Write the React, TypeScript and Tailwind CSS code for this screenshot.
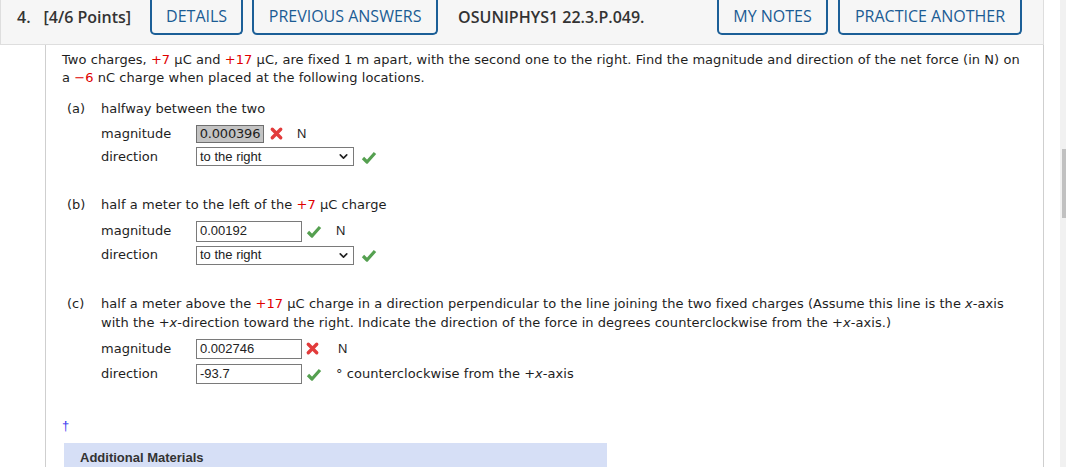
import { ChevronDown } from 'lucide-react';

const Red = ({ children }: { children: React.ReactNode }) => (
  <span className="text-[#e00000]">{children}</span>
);

const X = () => <i>x</i>;

const WrongMark = ({ className = '' }: { className?: string }) => (
  <svg viewBox="0 0 16 16" className={`w-[15px] h-[15px] ${className}`}>
    <path d="M3.5 3.5 L12.5 12.5 M12.5 3.5 L3.5 12.5" stroke="#e23b3b" strokeWidth="3.6" strokeLinecap="round" />
  </svg>
);

const RightMark = ({ className = '' }: { className?: string }) => (
  <svg viewBox="0 0 16 16" className={`w-[16px] h-[16px] ${className}`}>
    <path d="M2 9 L6 13 L14 4" fill="none" stroke="#55a050" strokeWidth="3.2" strokeLinejoin="round" />
  </svg>
);

const HeaderButton = ({ label, width }: { label: string; width: string }) => (
  <div
    className={`${width} h-[36px] -mt-[1px] flex items-center justify-center border-2 border-t-0 border-[#1c5f97] rounded-b-[5px] bg-[#f6f6f6] text-[#1b5c94] text-[16px] font-medium`}
  >
    {label}
  </div>
);

const TextBox = ({ value, width = 'w-[106px]', h = 'h-[20px]' }: { value: string; width?: string; h?: string }) => (
  <div
    className={`${width} ${h} border border-[#7a7a7a] bg-white px-[3px] flex items-center font-['Liberation_Sans',Arial,sans-serif] text-[13px] text-[#222]`}
  >
    {value}
  </div>
);

const Select = ({ value, h = 'h-[19px]' }: { value: string; h?: string }) => (
  <div
    className={`w-[158px] ${h} border border-[#7a7a7a] bg-white pl-[3px] pr-[3px] flex items-center justify-between font-['Liberation_Sans',Arial,sans-serif] text-[13px] text-[#222]`}
  >
    <span>{value}</span>
    <ChevronDown className="w-[13px] h-[13px]" strokeWidth={3} />
  </div>
);

const Label = ({ children }: { children: React.ReactNode }) => (
  <div className="w-[95px] shrink-0">{children}</div>
);

export default function App() {
  return (
    <div className="flex h-[467px] w-[1066px] overflow-hidden bg-white">
      <div className="w-[1044px] flex flex-col">
        <header className="h-[45px] shrink-0 flex items-start bg-[#f6f6f6] border border-t-0 border-[#dedede] font-['Open_Sans',sans-serif] pr-[21px]">
          <div className="flex items-center h-[34px] pl-[16px] text-[#333] font-semibold text-[16px]">
            <span>4.</span>
            <span className="ml-[13px]">[4/6 Points]</span>
          </div>
          <div className="ml-[19px] flex gap-[9px]">
            <HeaderButton label="DETAILS" width="w-[93px]" />
            <HeaderButton label="PREVIOUS ANSWERS" width="w-[186px]" />
          </div>
          <div className="ml-[20px] h-[34px] flex items-center text-[#333] font-semibold text-[16px]">
            OSUNIPHYS1 22.3.P.049.
          </div>
          <div className="ml-auto flex gap-[10px]">
            <HeaderButton label="MY NOTES" width="w-[111px]" />
            <HeaderButton label="PRACTICE ANOTHER" width="w-[184px]" />
          </div>
        </header>

        <main className="flex-1 ml-[45px] border-l border-r border-[#cfcfcf] pl-[16px] pt-[6px] font-['DejaVu_Sans',Verdana,sans-serif] text-[13px] leading-[18px] text-[#1e1e1e]">
          <p className="tracking-[0.05px] whitespace-nowrap">
            Two charges, <Red>+7</Red> μC and <Red>+17</Red> μC, are fixed 1 m apart, with the second one to the right. Find
            the magnitude and direction of the net force (in N) on
            <br />a <Red>−6</Red> nC charge when placed at the following locations.
          </p>

          <section className="mt-[13px] pl-[5px]">
            <div className="flex">
              <div className="w-[34px]">(a)</div>
              <div>halfway between the two</div>
            </div>
            <div className="pl-[34px] mt-[4px]">
              <div className="flex items-center h-[23px]">
                <Label>magnitude</Label>
                <div className="w-[68px] h-[18px] border border-[#6f6f6f] bg-[#c3c3c3] flex items-center justify-center text-[13px] tracking-[-0.2px]">
                  0.000396
                </div>
                <WrongMark className="ml-[5px]" />
                <span className="ml-[13px] font-['Liberation_Sans',Arial,sans-serif]">N</span>
              </div>
              <div className="flex items-center h-[23px]">
                <Label>direction</Label>
                <Select value="to the right" />
                <RightMark className="ml-[7px]" />
              </div>
            </div>
          </section>

          <section className="mt-[28px] pl-[5px]">
            <div className="flex">
              <div className="w-[34px]">(b)</div>
              <div className="tracking-[0.05px]">
                half a meter to the left of the <Red>+7</Red> μC charge
              </div>
            </div>
            <div className="pl-[34px] mt-[5px]">
              <div className="flex items-center h-[24px]">
                <Label>magnitude</Label>
                <TextBox value="0.00192" h="h-[21px]" />
                <RightMark className="ml-[4px]" />
                <span className="ml-[14px] font-['Liberation_Sans',Arial,sans-serif]">N</span>
              </div>
              <div className="flex items-center h-[24px]">
                <Label>direction</Label>
                <Select value="to the right" />
                <RightMark className="ml-[7px]" />
              </div>
            </div>
          </section>

          <section className="mt-[27px] pl-[5px]">
            <div className="flex leading-[19px]">
              <div className="w-[34px] shrink-0">(c)</div>
              <div className="tracking-[0.05px] whitespace-nowrap">
                half a meter above the <Red>+17</Red> μC charge in a direction perpendicular to the line joining the two
                fixed charges (Assume this line is the <X />-axis
                <br />
                with the +<X />-direction toward the right. Indicate the direction of the force in degrees counterclockwise
                from the +<X />-axis.)
              </div>
            </div>
            <div className="pl-[34px] mt-[4px]">
              <div className="flex items-center h-[25px]">
                <Label>magnitude</Label>
                <TextBox value="0.002746" />
                <WrongMark className="ml-[3px]" />
                <span className="ml-[18px] font-['Liberation_Sans',Arial,sans-serif]">N</span>
              </div>
              <div className="flex items-center h-[25px]">
                <Label>direction</Label>
                <TextBox value="-93.7" />
                <RightMark className="ml-[4px]" />
                <span className="ml-[14px] tracking-[0.05px]">
                  ° counterclockwise from the +<X />-axis
                </span>
              </div>
            </div>
          </section>

          <div className="mt-[31px] text-[#3a3af0] font-['Liberation_Sans',Arial,sans-serif] text-[13px]">†</div>

          <div className="mt-[8px] ml-[2px] w-[543px] h-[40px] bg-[#d6dff6] pl-[16px] pt-[7px] font-['Liberation_Sans',Arial,sans-serif] font-bold text-[13px] leading-[16px] text-[#333]">
            Additional Materials
          </div>
        </main>
      </div>

      <div className="w-[16px]" />
      <div className="w-[6px] bg-[#f1f1f1] flex flex-col items-end">
        <div className="mt-[149px] w-[4px] h-[69px] bg-[#c1c1c1]" />
      </div>
    </div>
  );
}
